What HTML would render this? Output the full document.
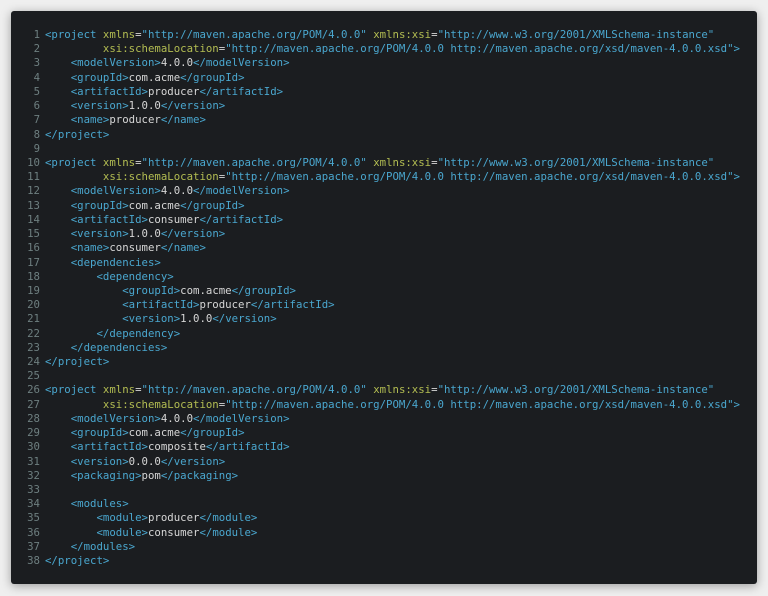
<!DOCTYPE html>
<html><head><meta charset="utf-8"><style>
html,body{margin:0;padding:0;width:768px;height:596px;background:#efefef;overflow:hidden}
.p{position:absolute;left:11px;top:11px;width:746px;height:573px;background:#1b1d20;border-radius:3px;box-shadow:0 2px 10px rgba(0,0,0,.35)}
pre{position:absolute;left:0;top:17px;margin:0;font-family:"DejaVu Sans Mono","Liberation Mono",monospace;font-size:10.7px;line-height:14.22px;color:#d6d6d6;white-space:pre}
.n{color:#6e7f80;display:inline-block;width:29px;text-align:right;margin-right:5px}
.t{color:#4aa7cf}.a{color:#b3bd52}
</style></head><body><div class="p"><pre>
<span class="n">1</span><span class="t">&lt;project</span> <span class="a">xmlns</span>=<span class="t">"http://maven.apache.org/POM/4.0.0"</span> <span class="a">xmlns:xsi</span>=<span class="t">"http://www.w3.org/2001/XMLSchema-instance"</span>
<span class="n">2</span>         <span class="a">xsi:schemaLocation</span>=<span class="t">"http://maven.apache.org/POM/4.0.0 http://maven.apache.org/xsd/maven-4.0.0.xsd"&gt;</span>
<span class="n">3</span>    <span class="t">&lt;modelVersion&gt;</span>4.0.0<span class="t">&lt;/modelVersion&gt;</span>
<span class="n">4</span>    <span class="t">&lt;groupId&gt;</span>com.acme<span class="t">&lt;/groupId&gt;</span>
<span class="n">5</span>    <span class="t">&lt;artifactId&gt;</span>producer<span class="t">&lt;/artifactId&gt;</span>
<span class="n">6</span>    <span class="t">&lt;version&gt;</span>1.0.0<span class="t">&lt;/version&gt;</span>
<span class="n">7</span>    <span class="t">&lt;name&gt;</span>producer<span class="t">&lt;/name&gt;</span>
<span class="n">8</span><span class="t">&lt;/project&gt;</span>
<span class="n">9</span>
<span class="n">10</span><span class="t">&lt;project</span> <span class="a">xmlns</span>=<span class="t">"http://maven.apache.org/POM/4.0.0"</span> <span class="a">xmlns:xsi</span>=<span class="t">"http://www.w3.org/2001/XMLSchema-instance"</span>
<span class="n">11</span>         <span class="a">xsi:schemaLocation</span>=<span class="t">"http://maven.apache.org/POM/4.0.0 http://maven.apache.org/xsd/maven-4.0.0.xsd"&gt;</span>
<span class="n">12</span>    <span class="t">&lt;modelVersion&gt;</span>4.0.0<span class="t">&lt;/modelVersion&gt;</span>
<span class="n">13</span>    <span class="t">&lt;groupId&gt;</span>com.acme<span class="t">&lt;/groupId&gt;</span>
<span class="n">14</span>    <span class="t">&lt;artifactId&gt;</span>consumer<span class="t">&lt;/artifactId&gt;</span>
<span class="n">15</span>    <span class="t">&lt;version&gt;</span>1.0.0<span class="t">&lt;/version&gt;</span>
<span class="n">16</span>    <span class="t">&lt;name&gt;</span>consumer<span class="t">&lt;/name&gt;</span>
<span class="n">17</span>    <span class="t">&lt;dependencies&gt;</span>
<span class="n">18</span>        <span class="t">&lt;dependency&gt;</span>
<span class="n">19</span>            <span class="t">&lt;groupId&gt;</span>com.acme<span class="t">&lt;/groupId&gt;</span>
<span class="n">20</span>            <span class="t">&lt;artifactId&gt;</span>producer<span class="t">&lt;/artifactId&gt;</span>
<span class="n">21</span>            <span class="t">&lt;version&gt;</span>1.0.0<span class="t">&lt;/version&gt;</span>
<span class="n">22</span>        <span class="t">&lt;/dependency&gt;</span>
<span class="n">23</span>    <span class="t">&lt;/dependencies&gt;</span>
<span class="n">24</span><span class="t">&lt;/project&gt;</span>
<span class="n">25</span>
<span class="n">26</span><span class="t">&lt;project</span> <span class="a">xmlns</span>=<span class="t">"http://maven.apache.org/POM/4.0.0"</span> <span class="a">xmlns:xsi</span>=<span class="t">"http://www.w3.org/2001/XMLSchema-instance"</span>
<span class="n">27</span>         <span class="a">xsi:schemaLocation</span>=<span class="t">"http://maven.apache.org/POM/4.0.0 http://maven.apache.org/xsd/maven-4.0.0.xsd"&gt;</span>
<span class="n">28</span>    <span class="t">&lt;modelVersion&gt;</span>4.0.0<span class="t">&lt;/modelVersion&gt;</span>
<span class="n">29</span>    <span class="t">&lt;groupId&gt;</span>com.acme<span class="t">&lt;/groupId&gt;</span>
<span class="n">30</span>    <span class="t">&lt;artifactId&gt;</span>composite<span class="t">&lt;/artifactId&gt;</span>
<span class="n">31</span>    <span class="t">&lt;version&gt;</span>0.0.0<span class="t">&lt;/version&gt;</span>
<span class="n">32</span>    <span class="t">&lt;packaging&gt;</span>pom<span class="t">&lt;/packaging&gt;</span>
<span class="n">33</span>
<span class="n">34</span>    <span class="t">&lt;modules&gt;</span>
<span class="n">35</span>        <span class="t">&lt;module&gt;</span>producer<span class="t">&lt;/module&gt;</span>
<span class="n">36</span>        <span class="t">&lt;module&gt;</span>consumer<span class="t">&lt;/module&gt;</span>
<span class="n">37</span>    <span class="t">&lt;/modules&gt;</span>
<span class="n">38</span><span class="t">&lt;/project&gt;</span></pre></div></body></html>
